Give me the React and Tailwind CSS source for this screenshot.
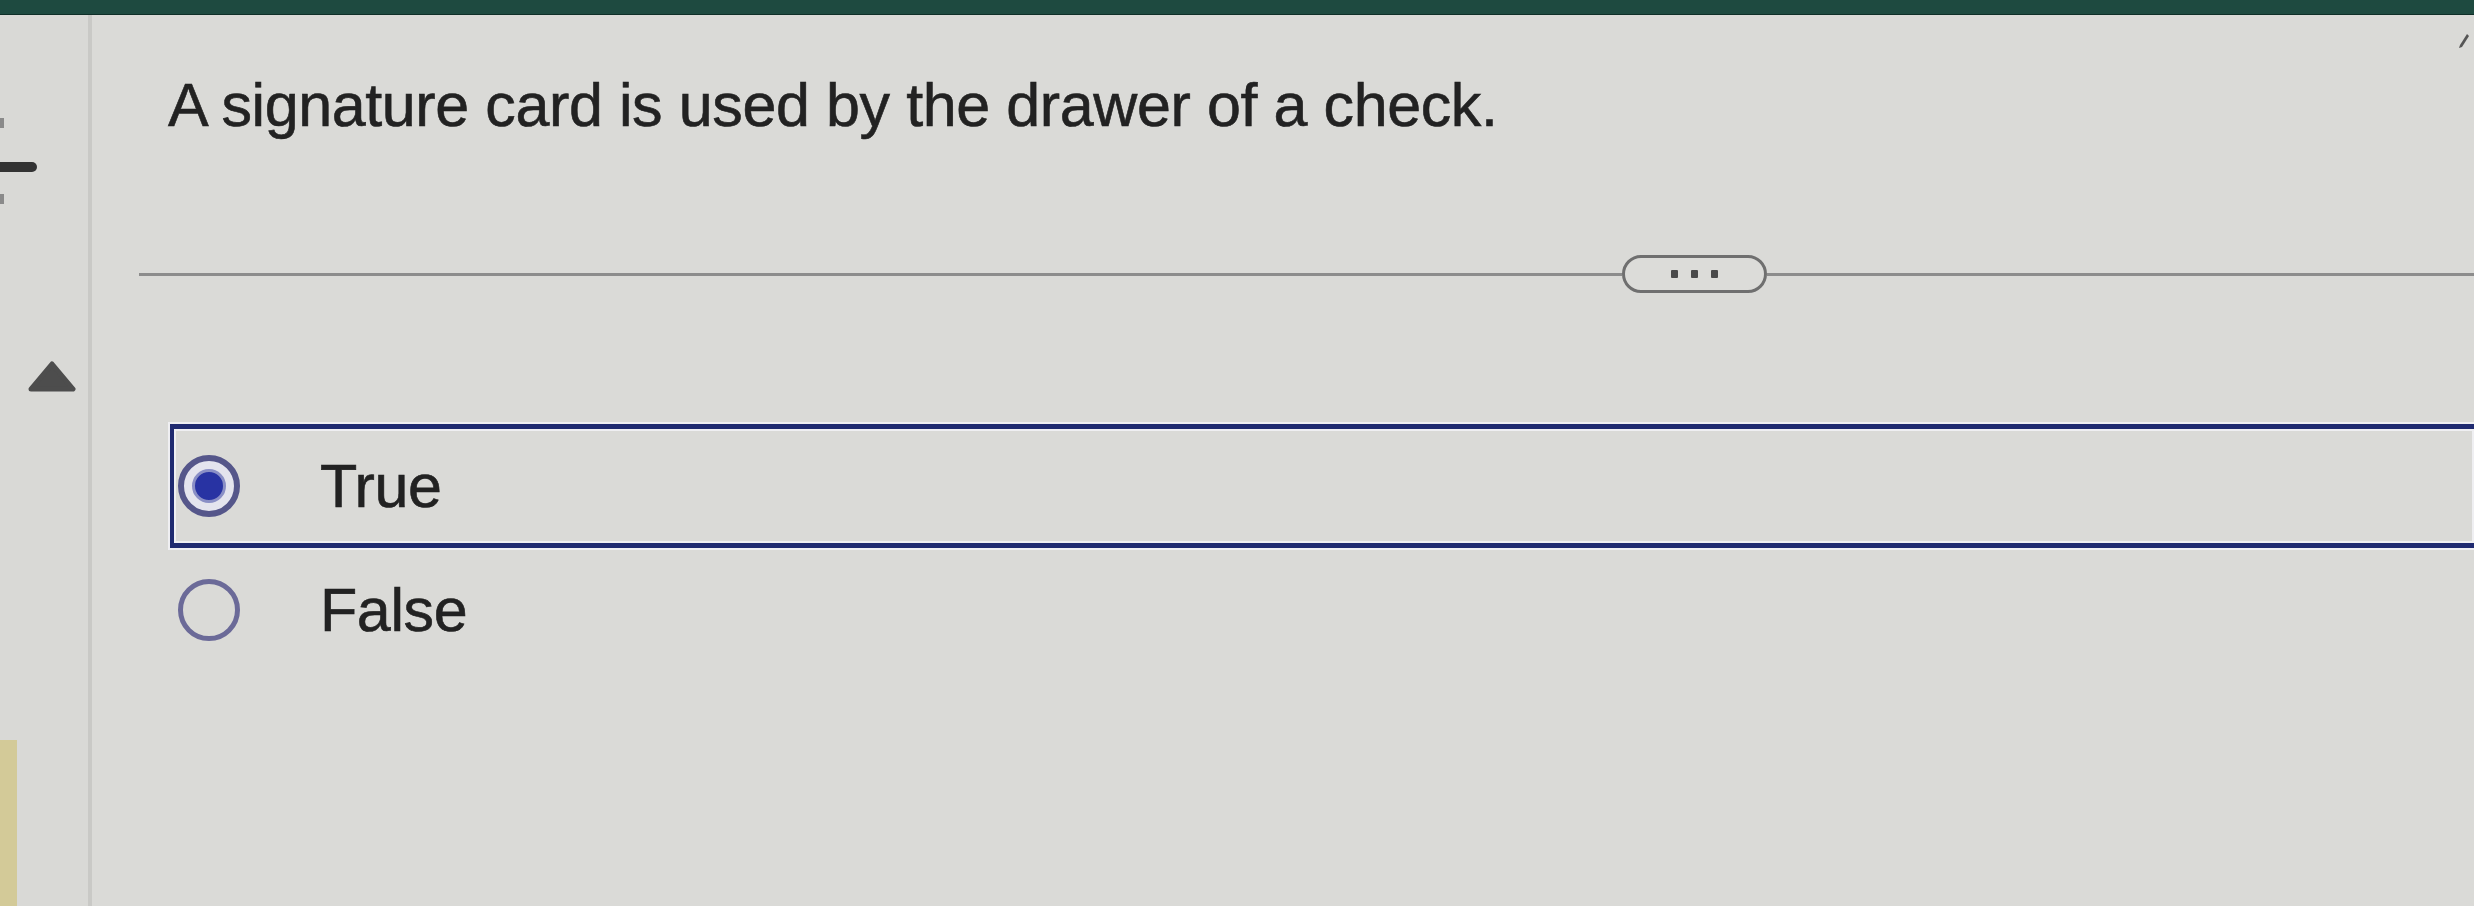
import React, { useState } from "react";

const options = ["True", "False"];

const Radio = ({ checked }) =>
  checked ? (
    <span className="flex h-[62px] w-[62px] shrink-0 items-center justify-center rounded-full border-[6px] border-[#55568a] bg-[#e4e4ee]">
      <span className="h-[34px] w-[34px] rounded-full border-[3px] border-[#8a8fc6] bg-[#2833a3]"></span>
    </span>
  ) : (
    <span className="h-[62px] w-[62px] shrink-0 rounded-full border-[5px] border-[#6b6a98]"></span>
  );

const App = () => {
  const [answer, setAnswer] = useState("True");

  return (
    <div className="flex h-[906px] w-full flex-col overflow-hidden bg-[#dadad7] font-['Liberation_Sans',Arial,sans-serif] text-[#222222]">
      {/* top bar */}
      <div className="h-[15px] shrink-0 border-b border-[#0f2f28] bg-[#1e4a40]"></div>

      <div className="flex flex-1">
        {/* left rail */}
        <div className="flex w-[92px] shrink-0 flex-col border-r-[4px] border-[#c9c9c6] bg-[#d9d9d6]">
          <span className="mt-[103px] h-[10px] w-[4px] bg-[#8a8a8a]"></span>
          <span className="mt-[34px] h-[10px] w-[37px] rounded-r-full bg-[#333333]"></span>
          <span className="mt-[22px] h-[10px] w-[4px] bg-[#8a8a8a]"></span>
          <svg className="ml-[28px] mt-[156px]" width="48" height="32" viewBox="0 0 48 32">
            <polygon points="24,4 45,29 3,29" fill="#4d4d4d" stroke="#4d4d4d" strokeWidth="5" strokeLinejoin="round" />
          </svg>
          <span className="mt-auto h-[166px] w-[17px] bg-[#d3ca98]"></span>
        </div>

        {/* question */}
        <div className="relative flex flex-1 flex-col">
          <svg className="absolute right-[4px] top-[18px]" width="12" height="16" viewBox="0 0 12 16">
            <path d="M9 1 L11 3 L4 14 L1 15 L2 12 Z" fill="#555555" />
          </svg>

          <p className="ml-[76px] mt-[60px] text-[61px] leading-none tracking-[-0.4px] [-webkit-text-stroke:0.6px_#222222]">
            A signature card is used by the drawer of a check.
          </p>

          <div className="ml-[47px] mt-[119px] flex h-[38px] items-center">
            <span className="h-[3px] w-[1483px] bg-[#8c8c8c]"></span>
            <button className="flex h-[38px] w-[145px] shrink-0 items-center justify-center gap-[13px] rounded-full border-[3px] border-[#6f6f6f] bg-[#dcdcd9]">
              <span className="h-[8px] w-[7px] rounded-[1px] bg-[#4a4a4a]"></span>
              <span className="h-[8px] w-[7px] rounded-[1px] bg-[#4a4a4a]"></span>
              <span className="h-[8px] w-[7px] rounded-[1px] bg-[#4a4a4a]"></span>
            </button>
            <span className="h-[3px] flex-1 bg-[#8c8c8c]"></span>
          </div>

          <div className="ml-[78px] mt-[131px] flex flex-col">
            {options.map((opt) => (
              <label
                key={opt}
                onClick={() => setAnswer(opt)}
                className={
                  answer === opt
                    ? "flex h-[124px] cursor-pointer items-center border-y-[5px] border-l-[4px] border-[#1f2a70] pl-[4px] shadow-[0_0_0_2px_#efeff2,inset_0_0_0_2px_#efeff2]"
                    : "flex h-[124px] cursor-pointer items-center border-y-[5px] border-l-[4px] border-transparent pl-[4px]"
                }
              >
                <Radio checked={answer === opt} />
                <span className="ml-[80px] text-[61px] leading-none tracking-[-0.4px] [-webkit-text-stroke:0.6px_#222222]">{opt}</span>
              </label>
            ))}
          </div>
        </div>
      </div>
    </div>
  );
};

export default App;
